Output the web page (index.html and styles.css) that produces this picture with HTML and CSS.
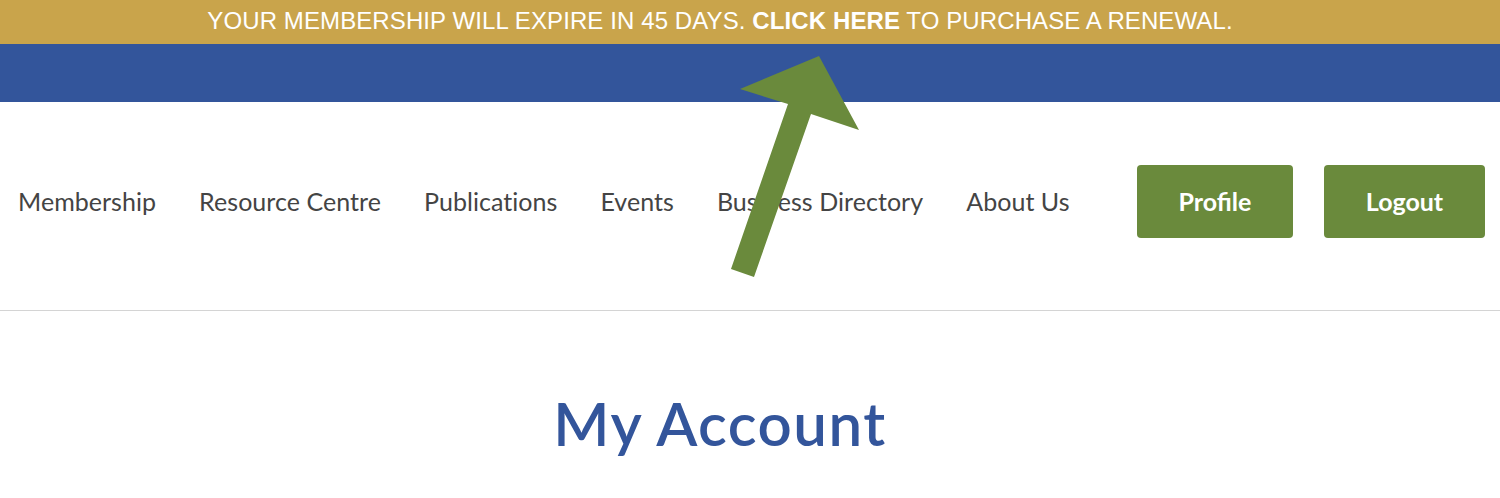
FILE: index.html
```html
<!DOCTYPE html>
<html lang="en">
<head>
  <meta charset="UTF-8">
  <meta name="viewport" content="width=device-width, initial-scale=1.0">
  <title>My Account</title>
  <link rel="stylesheet" href="styles.css">
</head>
<body>

<!-- Renewal notice -->
<div class="notice">
  YOUR MEMBERSHIP WILL EXPIRE IN 45 DAYS. <a href="#"><b>CLICK HERE</b></a> TO PURCHASE A RENEWAL.
</div>

<div class="topbar"></div>

<header>
  <nav class="menu">
    <a href="#">Membership</a>
    <a href="#">Resource Centre</a>
    <a href="#">Publications</a>
    <a href="#">Events</a>
    <a href="#">Business Directory</a>
    <a href="#">About Us</a>
  </nav>
  <div class="actions">
    <a class="btn btn-profile" href="#">Profile</a>
    <a class="btn btn-logout" href="#">Logout</a>
  </div>
</header>

<main>
  <h1>My Account</h1>
</main>

<!-- Pointer arrow -->
<svg class="arrow" width="1500" height="498" viewBox="0 0 1500 498">
  <polygon points="819,56 859,130 811,114 754,277 731,269 788,104 740,89" fill="#6a8a3c"/>
</svg>

</body>
</html>
```

FILE: styles.css
```css
body {
  margin: 0; padding: 0;
  font-family: Lato, "Open Sans", sans-serif;
  color: #444;
  background: #fff;
  position: relative;
  overflow: hidden;
}
a { text-decoration: none; color: inherit; }

.notice {
  background: #c9a44b; color: #fff;
  height: 44px; line-height: 42px;
  text-align: center;
  font-family: "Liberation Sans", Arial, sans-serif;
  font-size: 24px;
  letter-spacing: 0.1px;
  padding-right: 60px;
}
.notice b { font-weight: bold; }

.topbar { background: #33559b; height: 58px; }

header {
  display: flex; align-items: center;
  box-sizing: border-box;
  height: 209px;
  border-bottom: 1px solid #d4d4d4;
  padding: 0 15px 10px 18px;
}
.menu { display: flex; gap: 43px; font-size: 25px; letter-spacing: 0.05px; color: #444; }
.actions { margin-left: auto; display: flex; gap: 31px; }
.btn {
  display: flex; align-items: center; justify-content: center;
  height: 73px;
  background: #6a8a3c; color: #fff;
  border-radius: 4px;
  font-size: 25px; font-weight: bold;
}
.btn-profile { width: 156px; }
.btn-logout { width: 161px; }

main { text-align: center; padding: 76px 60px 0 0; }
h1 {
  margin: 0;
  font-size: 60px; font-weight: 600;
  color: #33559b;
  letter-spacing: 1.5px;
}

.arrow { position: absolute; left: 0; top: 0; }
```
